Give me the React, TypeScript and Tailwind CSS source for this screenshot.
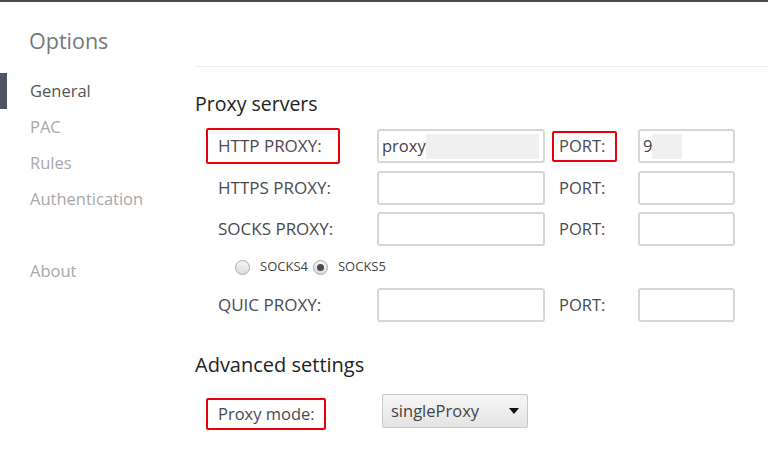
import React from "react";

const font = { fontFamily: '"Open Sans", "Noto Sans", Arial, sans-serif' };

const navItems = [
  { label: "General", active: true },
  { label: "PAC" },
  { label: "Rules" },
  { label: "Authentication" },
];

function Label({ text, marked }: { text: string; marked?: boolean }) {
  return (
    <div
      className={`h-[36px] w-[134px] flex items-center pl-[10px] rounded-[2px] border-2 ${
        marked ? "border-[#e8000b]" : "border-transparent"
      }`}
    >
      <span className="text-[17px] text-[#4a4a52] whitespace-nowrap">{text}</span>
    </div>
  );
}

function TextBox({ w, value, mask }: { w: number; value?: string; mask?: number }) {
  return (
    <div
      className="h-[34px] border-2 border-[#d6d6d6] rounded-[3px] bg-white flex items-center pl-[3px]"
      style={{ width: w }}
    >
      {value && <span className="text-[16.5px] text-[#444]">{value}</span>}
      {mask ? <span className="h-[25px] bg-[#f0f0f0]" style={{ width: mask }} /> : null}
    </div>
  );
}

function Port({ marked }: { marked?: boolean }) {
  return (
    <div
      className={`h-[31px] w-[65px] flex items-center pl-[5px] rounded-[2px] border-2 ${
        marked ? "border-[#e8000b]" : "border-transparent"
      }`}
    >
      <span className="text-[16.5px] text-[#4a4a52]">PORT:</span>
    </div>
  );
}

function ProxyRow({
  label,
  marked,
  value,
  mask,
  port,
  portMask,
}: {
  label: string;
  marked?: boolean;
  value?: string;
  mask?: number;
  port?: string;
  portMask?: number;
}) {
  return (
    <div className="flex items-center h-[34px]">
      <Label text={label} marked={marked} />
      <div className="w-[37px]" />
      <TextBox w={168} value={value} mask={mask} />
      <div className="w-[7px]" />
      <Port marked={marked} />
      <div className="w-[21px]" />
      <TextBox w={97} value={port} mask={portMask} />
    </div>
  );
}

function Radio({ checked, label }: { checked?: boolean; label: string }) {
  return (
    <div className="flex items-center">
      <span className="w-[15px] h-[15px] rounded-full border border-[#a8a8a8] bg-gradient-to-b from-[#f4f4f4] to-[#dcdcdc] flex items-center justify-center">
        {checked && <span className="w-[7px] h-[7px] rounded-full bg-[#4a4a4a]" />}
      </span>
      <span className="ml-[10px] text-[13px] text-[#444]">{label}</span>
    </div>
  );
}

export default function App() {
  return (
    <div className="w-[768px] h-[465px] bg-white overflow-hidden flex flex-col" style={font}>
      <div className="h-[2px] bg-[#4a4a4a]" />
      <div className="flex flex-1">
        <aside className="w-[195px] shrink-0">
          <div className="pl-[29px] pt-[24px] text-[21.5px] text-[#777] leading-[30px]">Options</div>
          <nav className="mt-[17px] flex flex-col">
            {navItems.map((n) => (
              <div key={n.label} className="flex h-[36px] items-center">
                <div className={`w-[7px] h-[36px] ${n.active ? "bg-[#4c5561]" : ""}`} />
                <span
                  className={`ml-[23px] text-[16.5px] ${n.active ? "text-[#555]" : "text-[#a8a8a8]"}`}
                >
                  {n.label}
                </span>
              </div>
            ))}
            <div className="flex h-[36px] items-center mt-[36px]">
              <div className="w-[7px]" />
              <span className="ml-[23px] text-[16.5px] text-[#a8a8a8]">About</span>
            </div>
          </nav>
        </aside>
        <main className="flex-1">
          <div className="h-[65px] border-b border-[#ececec]" />
          <h2 className="mt-[24px] text-[19.5px] text-[#222] leading-[26px]">Proxy servers</h2>
          <div className="mt-[12px] pl-[11px] flex flex-col">
            <ProxyRow label="HTTP PROXY:" marked value="proxy" mask={113} port="9" portMask={30} />
            <div className="h-[8px]" />
            <ProxyRow label="HTTPS PROXY:" />
            <div className="h-[7px]" />
            <ProxyRow label="SOCKS PROXY:" />
            <div className="flex items-center gap-[5px] h-[42px] pl-[29px]">
              <Radio label="SOCKS4" />
              <Radio checked label="SOCKS5" />
            </div>
            <ProxyRow label="QUIC PROXY:" />
          </div>
          <h2 className="mt-[30px] text-[20px] text-[#222] leading-[26px]">Advanced settings</h2>
          <div className="mt-[14px] pl-[11px] flex items-center">
            <div className="mt-[6px] h-[32px] w-[120px] flex items-center pl-[10px] rounded-[2px] border-2 border-[#e8000b]">
              <span className="text-[16.5px] text-[#4a4a52] whitespace-nowrap">Proxy mode:</span>
            </div>
            <div className="ml-[56px] w-[146px] h-[34px] border border-[#c8c8c8] rounded-[2px] bg-gradient-to-b from-[#f6f6f6] to-[#e4e4e4] flex items-center justify-between pl-[8px] pr-[8px]">
              <span className="text-[16.5px] text-[#444]">singleProxy</span>
              <svg width="10" height="6" viewBox="0 0 10 6">
                <path d="M0 0 L10 0 L5 6 Z" fill="#111" />
              </svg>
            </div>
          </div>
        </main>
      </div>
    </div>
  );
}
